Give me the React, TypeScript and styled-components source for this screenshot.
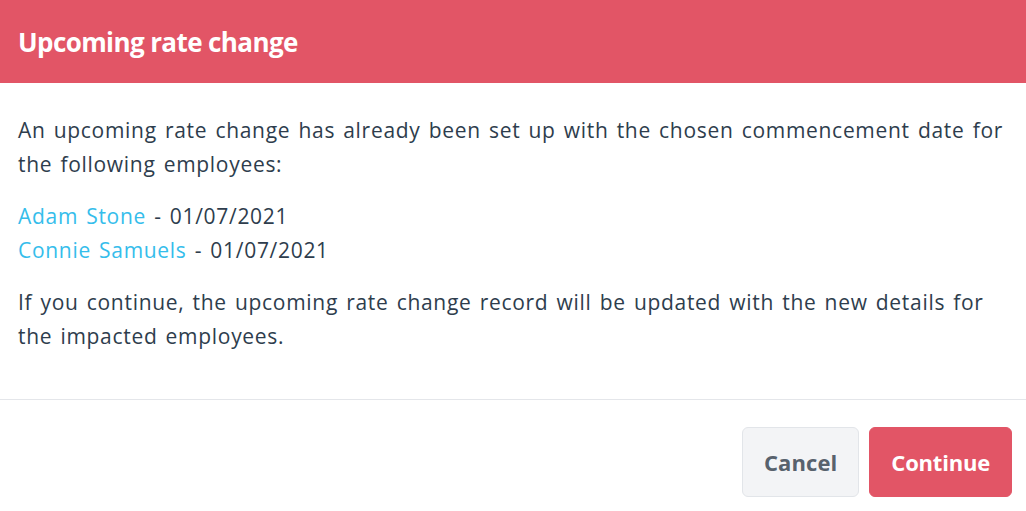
import React from "react";
import styled, { createGlobalStyle } from "styled-components";

const Global = createGlobalStyle`
  html, body { margin: 0; padding: 0; background: #ffffff; }
  body { font-family: "Open Sans", "Noto Sans", sans-serif; }
  * { box-sizing: border-box; }
`;

const Modal = styled.div`
  width: 1026px;
  height: 511px;
  background: #ffffff;
  display: flex;
  flex-direction: column;
  overflow: hidden;
`;

const Header = styled.header`
  height: 83px;
  background: #e25566;
  display: flex;
  align-items: center;
  padding: 0 18px;
  flex-shrink: 0;
`;

const Title = styled.h1`
  margin: 0;
  color: #ffffff;
  font-size: 26px;
  font-weight: 700;
  letter-spacing: -0.6px;
`;

const Body = styled.div`
  padding: 30px 18px 46px;
  color: #2e3d4d;
  font-size: 21px;
  line-height: 34px;
  letter-spacing: 0.7px;
  word-spacing: 2px;
  border-bottom: 1px solid #e4e6ea;
`;

const Paragraph = styled.p`
  margin: 0 0 18px;
  &:last-child { margin-bottom: 0; }
`;

const Employee = styled.div``;

const Link = styled.a`
  color: #35bdeb;
  text-decoration: none;
  cursor: pointer;
`;

const Footer = styled.footer`
  display: flex;
  justify-content: flex-end;
  gap: 10px;
  padding: 27px 14px 0;
`;

const Button = styled.button<{ $primary?: boolean }>`
  height: 70px;
  padding: 0 ${(p) => (p.$primary ? "21px" : "21px")};
  border-radius: 6px;
  font-family: inherit;
  font-size: 22px;
  font-weight: 700;
  letter-spacing: ${(p) => (p.$primary ? "-0.2px" : "0.1px")};
  cursor: pointer;
  border: 1px solid ${(p) => (p.$primary ? "#e25566" : "#e2e5e9")};
  background: ${(p) => (p.$primary ? "#e25566" : "#f3f4f6")};
  color: ${(p) => (p.$primary ? "#ffffff" : "#58626d")};
`;

const employees = [
  { name: "Adam Stone", date: "01/07/2021" },
  { name: "Connie Samuels", date: "01/07/2021" },
];

export default function App() {
  return (
    <>
      <Global />
      <Modal>
        <Header>
          <Title>Upcoming rate change</Title>
        </Header>
        <Body>
          <Paragraph>
            An upcoming rate change has already been set up with the chosen commencement date for the following employees:
          </Paragraph>
          <Paragraph>
            {employees.map((e) => (
              <Employee key={e.name}>
                <Link>{e.name}</Link> - {e.date}
              </Employee>
            ))}
          </Paragraph>
          <Paragraph>
            If you continue, the upcoming rate change record will be updated with the new details for the impacted employees.
          </Paragraph>
        </Body>
        <Footer>
          <Button>Cancel</Button>
          <Button $primary>Continue</Button>
        </Footer>
      </Modal>
    </>
  );
}
